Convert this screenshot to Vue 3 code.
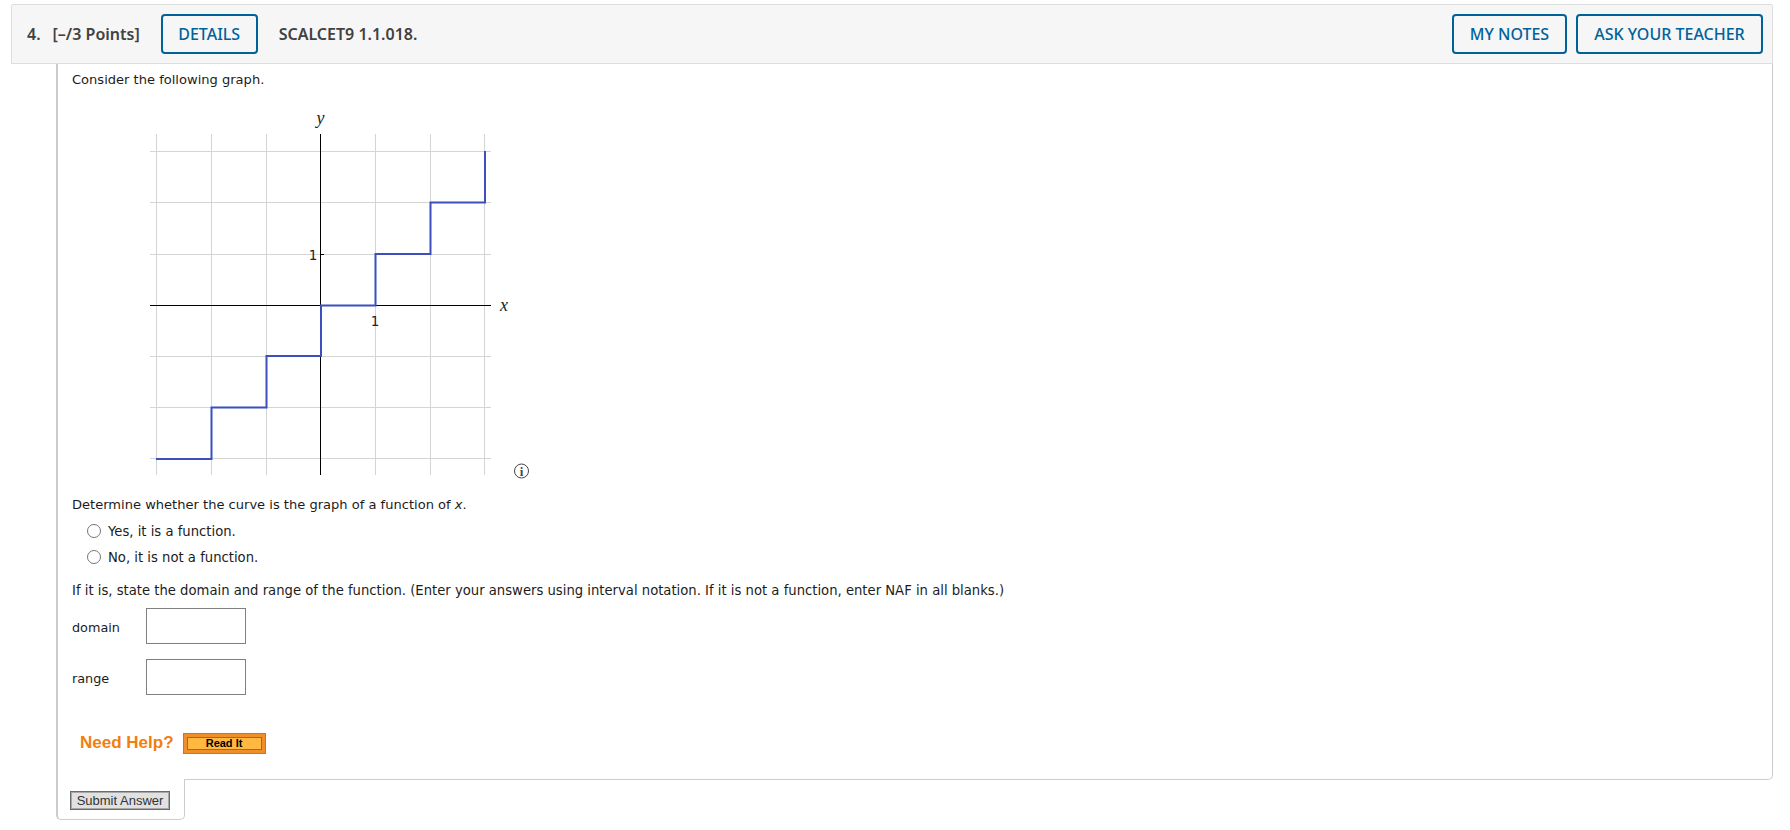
<script setup>
const verticals = [156.5, 211.5, 266.5, 375.5, 430.5, 484.5]
const horizontals = [151.5, 202.5, 254.5, 356.5, 407.5, 458.5]
const curve = 'M156 459H211.5V407.5H266.5V356H321V305.5H375.5V254H430.5V202.5H485V151'
</script>

<template>
  <div class="page">
    <header class="head">
      <span class="num">4.</span>
      <span class="points">[–/3 Points]</span>
      <button class="btn details">DETAILS</button>
      <span class="code">SCALCET9 1.1.018.</span>
      <span class="spacer"></span>
      <button class="btn notes">MY NOTES</button>
      <button class="btn ask">ASK YOUR TEACHER</button>
    </header>

    <section class="panel">
      <p class="intro">Consider the following graph.</p>

      <div class="graph-row">
        <svg class="graph" width="500" height="387" viewBox="100 100 500 387" xmlns="http://www.w3.org/2000/svg">
          <g stroke="#d4d4d4" stroke-width="1" fill="none">
            <path v-for="x in verticals" :key="'v' + x" :d="`M${x} 134V475`" />
            <path v-for="y in horizontals" :key="'h' + y" :d="`M150 ${y}H491`" />
          </g>
          <path d="M150 305.5H491M320.5 134V475M320.5 254.5H324" stroke="#000" stroke-width="1" fill="none" />
          <path :d="curve" stroke="#3b4fbd" stroke-width="2" fill="none" />
          <text x="320.5" y="124" class="var" text-anchor="middle">y</text>
          <text x="504" y="311" class="var" text-anchor="middle">x</text>
          <text x="313" y="260" class="tick" text-anchor="middle">1</text>
          <text x="375" y="326" class="tick" text-anchor="middle">1</text>
          <circle cx="521.5" cy="471" r="7" fill="none" stroke="#444" stroke-width="1" />
          <text x="521.5" y="475.5" class="info" text-anchor="middle">i</text>
        </svg>
      </div>

      <p class="question">Determine whether the curve is the graph of a function of <i>x</i>.</p>
      <label class="choice first"><input type="radio" name="fn" /><span>Yes, it is a function.</span></label>
      <label class="choice"><input type="radio" name="fn" /><span>No, it is not a function.</span></label>

      <p class="state">If it is, state the domain and range of the function. (Enter your answers using interval notation. If it is not a function, enter NAF in all blanks.)</p>

      <div class="field"><span class="label">domain</span><input class="answer" type="text" /></div>
      <div class="field"><span class="label">range</span><input class="answer" type="text" /></div>

      <div class="help">
        <span class="need">Need Help?</span>
        <span class="read"><span class="read-inner">Read It</span></span>
      </div>
    </section>

    <div class="tab">
      <button class="submit">Submit Answer</button>
    </div>
  </div>
</template>

<style>
html, body { margin: 0; background: #fff; }
</style>

<style scoped>
.page {
  width: 1762px;
  padding: 4px 0 10px 11px;
  font-family: "DejaVu Sans", Verdana, sans-serif;
  color: #1c1c1c;
}
.head {
  box-sizing: border-box;
  height: 60px;
  display: flex;
  align-items: center;
  background: #f6f6f6;
  border: 1px solid #dddddd;
  border-radius: 2px 2px 0 0;
  padding: 0 9px 0 15px;
  font-family: "Noto Sans", "Open Sans", sans-serif;
  font-size: 16px;
  font-weight: 600;
  color: #414141;
}
.num { margin-right: 12px; }
.points { margin-right: 21px; }
.code { margin-left: 21px; }
.spacer { flex: 1; }
.btn {
  box-sizing: border-box;
  height: 40px;
  border: 2px solid #00629b;
  border-radius: 4px;
  background: transparent;
  color: #00629b;
  font-family: inherit;
  font-size: 16px;
  font-weight: 500;
  padding: 0;
}
.details { width: 97px; }
.notes { width: 115px; margin-right: 9px; }
.ask { width: 187px; }

.panel {
  box-sizing: border-box;
  width: 1717px;
  height: 716px;
  margin-left: 45px;
  padding-left: 14px;
  border: 1px solid #cccccc;
  border-width: 0 1px 1px 2px;
  border-radius: 0 0 5px 0;
  font-size: 13.2px;
}
p { margin: 0; }
.intro { padding-top: 8px; line-height: 16px; font-size: 13.05px; }
.graph-row { height: 387px; margin-left: 28px; padding-top: 12px; }
.graph { display: block; }
.var { font-family: "Liberation Serif", serif; font-style: italic; font-size: 18px; fill: #222; }
.tick { font-family: "DejaVu Sans", sans-serif; font-size: 13.5px; fill: #222; }
.info { font-family: "Liberation Serif", serif; font-size: 13px; font-weight: 700; fill: #444; }
.question { margin-top: 10px; line-height: 16px; font-size: 13.05px; }
.question i { font-style: italic; }
.choice { display: flex; align-items: center; height: 26px; margin-left: 10px; }
.choice.first { margin-top: 5px; }
.choice input { width: 14px; height: 14px; margin: 0 7px 0 5px; }
.state { margin-top: 13px; line-height: 16px; }
.field { display: flex; align-items: center; height: 36px; margin-bottom: 15px; }
.state + .field { margin-top: 9px; }
.label { width: 74px; margin-top: 2px; font-size: 12.8px; }
.answer {
  box-sizing: border-box;
  width: 100px;
  height: 36px;
  border: 1px solid #808080;
  background: #fff;
  padding: 0;
}
.help { display: flex; align-items: center; height: 22px; margin-top: 37px; padding-left: 8px; }
.need {
  font-family: "Liberation Sans", Arial, sans-serif;
  font-size: 17px;
  font-weight: 700;
  color: #f07f0e;
  margin-right: 9px;
}
.read {
  box-sizing: border-box;
  width: 83px;
  height: 21px;
  padding: 3px;
  background: #f08f2a;
  border: 1px solid #b87a34;
  display: flex;
}
.read-inner {
  flex: 1;
  box-sizing: border-box;
  border: 1px solid #a8691c;
  background: #ffb940;
  text-align: center;
  font-family: "Liberation Sans", Arial, sans-serif;
  font-size: 11px;
  font-weight: 700;
  line-height: 11px;
  color: #000;
}
.tab {
  position: relative;
  box-sizing: border-box;
  width: 129px;
  height: 41px;
  margin: -1px 0 0 45px;
  background: #fff;
  border: 1px solid #cccccc;
  border-width: 0 1px 1px 2px;
  border-radius: 0 0 5px 5px;
  padding: 12px 0 0 12px;
}
.submit {
  display: block;
  box-sizing: border-box;
  width: 100px;
  height: 19px;
  padding: 0;
  border: 1px solid #6a6a6a;
  box-shadow: inset 0 0 0 1px #a8a8a8;
  background: #e1e1e1;
  font-family: "Liberation Sans", Arial, sans-serif;
  font-size: 13px;
  line-height: 15px;
  color: #333;
}
</style>
